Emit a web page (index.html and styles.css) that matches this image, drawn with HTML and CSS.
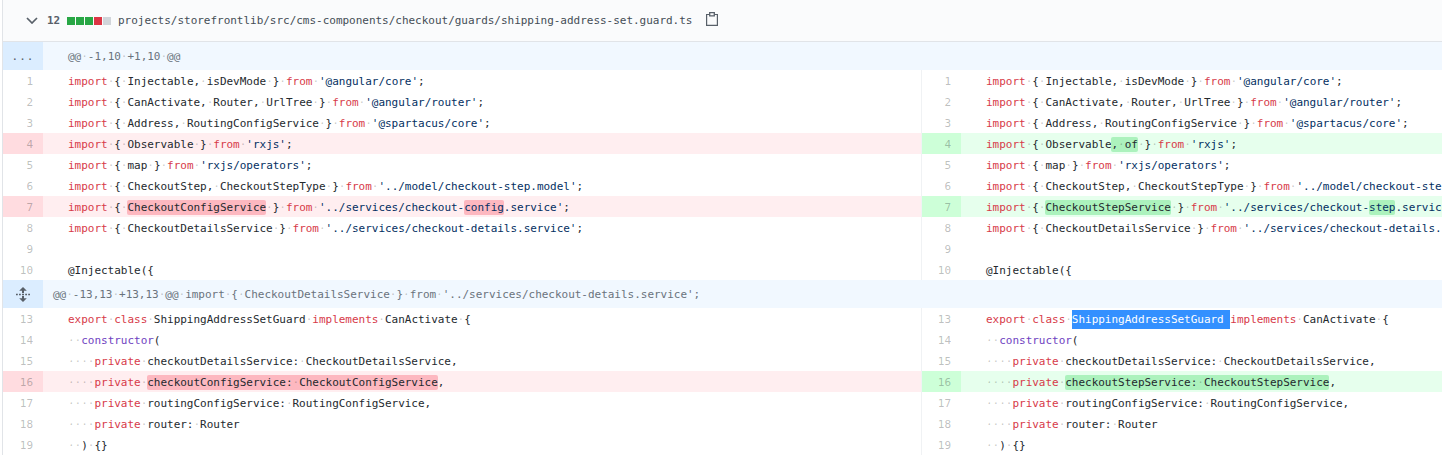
FILE: index.html
```html
<!DOCTYPE html>
<html lang="en">
<head>
    <meta charset="UTF-8">
    <title>shipping-address-set.guard.ts</title>
    <link rel="stylesheet" href="styles.css">
</head>
<body>
    <div class="file">
        <div class="file-header">
            <svg class="chevron" width="12" height="7" viewBox="0 0 12 7"><path d="M1 1l5 5 5-5" fill="none" stroke="#586069" stroke-width="1.7"/></svg>
            <span class="count">12</span>
            <span class="diffstat"><i class="add"></i><i class="add"></i><i class="add"></i><i class="del"></i><i class="none"></i></span>
            <span class="path">projects/storefrontlib/src/cms-components/checkout/guards/shipping-address-set.guard.ts</span>
            <svg class="clippy" width="12" height="14" viewBox="0 0 12 14"><path d="M3.5 2.5h-2.9v10.9h10.8V2.5H8.5" fill="none" stroke="#586069" stroke-width="1.2"/><path d="M3.7 .7h4.6v3.1H3.7z" fill="none" stroke="#586069" stroke-width="1.3"/></svg>
        </div>

        <div class="hunk">
            <div class="hunk-num dots">...</div>
            <div class="hunk-code first"><i>@@</i><u>·</u>-1,10<u>·</u>+1,10<u>·</u><i>@@</i></div>
        </div>

        <div class="row">
            <div class="side left"><div class="num">1</div><div class="code"><b>import</b><u>·</u>{<u>·</u>Injectable,<u>·</u>isDevMode<u>·</u>}<u>·</u><b>from</b><u>·</u><s>'@angular/core'</s>;</div></div>
            <div class="side right"><div class="num">1</div><div class="code"><b>import</b><u>·</u>{<u>·</u>Injectable,<u>·</u>isDevMode<u>·</u>}<u>·</u><b>from</b><u>·</u><s>'@angular/core'</s>;</div></div>
        </div>
        <div class="row">
            <div class="side left"><div class="num">2</div><div class="code"><b>import</b><u>·</u>{<u>·</u>CanActivate,<u>·</u>Router,<u>·</u>UrlTree<u>·</u>}<u>·</u><b>from</b><u>·</u><s>'@angular/router'</s>;</div></div>
            <div class="side right"><div class="num">2</div><div class="code"><b>import</b><u>·</u>{<u>·</u>CanActivate,<u>·</u>Router,<u>·</u>UrlTree<u>·</u>}<u>·</u><b>from</b><u>·</u><s>'@angular/router'</s>;</div></div>
        </div>
        <div class="row">
            <div class="side left"><div class="num">3</div><div class="code"><b>import</b><u>·</u>{<u>·</u>Address,<u>·</u>RoutingConfigService<u>·</u>}<u>·</u><b>from</b><u>·</u><s>'@spartacus/core'</s>;</div></div>
            <div class="side right"><div class="num">3</div><div class="code"><b>import</b><u>·</u>{<u>·</u>Address,<u>·</u>RoutingConfigService<u>·</u>}<u>·</u><b>from</b><u>·</u><s>'@spartacus/core'</s>;</div></div>
        </div>
        <div class="row">
            <div class="side left removed"><div class="num">4</div><div class="code"><b>import</b><u>·</u>{<u>·</u>Observable<u>·</u>}<u>·</u><b>from</b><u>·</u><s>'rxjs'</s>;</div></div>
            <div class="side right added"><div class="num">4</div><div class="code"><b>import</b><u>·</u>{<u>·</u>Observable<em>,<u>·</u>of</em><u>·</u>}<u>·</u><b>from</b><u>·</u><s>'rxjs'</s>;</div></div>
        </div>
        <div class="row">
            <div class="side left"><div class="num">5</div><div class="code"><b>import</b><u>·</u>{<u>·</u>map<u>·</u>}<u>·</u><b>from</b><u>·</u><s>'rxjs/operators'</s>;</div></div>
            <div class="side right"><div class="num">5</div><div class="code"><b>import</b><u>·</u>{<u>·</u>map<u>·</u>}<u>·</u><b>from</b><u>·</u><s>'rxjs/operators'</s>;</div></div>
        </div>
        <div class="row">
            <div class="side left"><div class="num">6</div><div class="code"><b>import</b><u>·</u>{<u>·</u>CheckoutStep,<u>·</u>CheckoutStepType<u>·</u>}<u>·</u><b>from</b><u>·</u><s>'../model/checkout-step.model'</s>;</div></div>
            <div class="side right"><div class="num">6</div><div class="code"><b>import</b><u>·</u>{<u>·</u>CheckoutStep,<u>·</u>CheckoutStepType<u>·</u>}<u>·</u><b>from</b><u>·</u><s>'../model/checkout-step.model'</s>;</div></div>
        </div>
        <div class="row">
            <div class="side left removed"><div class="num">7</div><div class="code"><b>import</b><u>·</u>{<u>·</u><em>CheckoutConfigService</em><u>·</u>}<u>·</u><b>from</b><u>·</u><s>'../services/checkout-<em>config</em>.service'</s>;</div></div>
            <div class="side right added"><div class="num">7</div><div class="code"><b>import</b><u>·</u>{<u>·</u><em>CheckoutStepService</em><u>·</u>}<u>·</u><b>from</b><u>·</u><s>'../services/checkout-<em>step</em>.service'</s>;</div></div>
        </div>
        <div class="row">
            <div class="side left"><div class="num">8</div><div class="code"><b>import</b><u>·</u>{<u>·</u>CheckoutDetailsService<u>·</u>}<u>·</u><b>from</b><u>·</u><s>'../services/checkout-details.service'</s>;</div></div>
            <div class="side right"><div class="num">8</div><div class="code"><b>import</b><u>·</u>{<u>·</u>CheckoutDetailsService<u>·</u>}<u>·</u><b>from</b><u>·</u><s>'../services/checkout-details.service'</s>;</div></div>
        </div>
        <div class="row">
            <div class="side left"><div class="num">9</div><div class="code"></div></div>
            <div class="side right"><div class="num">9</div><div class="code"></div></div>
        </div>
        <div class="row">
            <div class="side left"><div class="num">10</div><div class="code">@Injectable({</div></div>
            <div class="side right"><div class="num">10</div><div class="code">@Injectable({</div></div>
        </div>

        <div class="hunk">
            <div class="hunk-num">
                <svg width="14" height="15" viewBox="0 0 14 15"><path d="M7 0L3.2 3.8H6V6h2V3.8h2.8zM7 15l-3.8-3.8H6V9h2v2.2h2.8z" fill="#586069"/><path d="M0 7.5h1.8M3 7.5h1.8M6 7.5h2M9.2 7.5H11M12.2 7.5H14" stroke="#586069" stroke-width="1.4"/></svg>
            </div>
            <div class="hunk-code"><i>@@</i><u>·</u>-13,13<u>·</u>+13,13<u>·</u><i>@@</i><u>·</u>import<u>·</u>{<u>·</u>CheckoutDetailsService<u>·</u>}<u>·</u>from<u>·</u>'../services/checkout-details.service';</div>
        </div>

        <div class="row">
            <div class="side left"><div class="num">13</div><div class="code"><b>export</b><u>·</u><b>class</b><u>·</u>ShippingAddressSetGuard<u>·</u><b>implements</b><u>·</u>CanActivate<u>·</u>{</div></div>
            <div class="side right"><div class="num">13</div><div class="code"><b>export</b><u>·</u><b>class</b><u>·</u><span class="selected">ShippingAddressSetGuard </span><b>implements</b><u>·</u>CanActivate<u>·</u>{</div></div>
        </div>
        <div class="row">
            <div class="side left"><div class="num">14</div><div class="code"><u>··</u><var>constructor</var>(</div></div>
            <div class="side right"><div class="num">14</div><div class="code"><u>··</u><var>constructor</var>(</div></div>
        </div>
        <div class="row">
            <div class="side left"><div class="num">15</div><div class="code"><u>····</u><b>private</b><u>·</u>checkoutDetailsService:<u>·</u>CheckoutDetailsService,</div></div>
            <div class="side right"><div class="num">15</div><div class="code"><u>····</u><b>private</b><u>·</u>checkoutDetailsService:<u>·</u>CheckoutDetailsService,</div></div>
        </div>
        <div class="row">
            <div class="side left removed"><div class="num">16</div><div class="code"><u>····</u><b>private</b><u>·</u><em>checkoutConfigService:<u>·</u>CheckoutConfigService</em>,</div></div>
            <div class="side right added"><div class="num">16</div><div class="code"><u>····</u><b>private</b><u>·</u><em>checkoutStepService:<u>·</u>CheckoutStepService</em>,</div></div>
        </div>
        <div class="row">
            <div class="side left"><div class="num">17</div><div class="code"><u>····</u><b>private</b><u>·</u>routingConfigService:<u>·</u>RoutingConfigService,</div></div>
            <div class="side right"><div class="num">17</div><div class="code"><u>····</u><b>private</b><u>·</u>routingConfigService:<u>·</u>RoutingConfigService,</div></div>
        </div>
        <div class="row">
            <div class="side left"><div class="num">18</div><div class="code"><u>····</u><b>private</b><u>·</u>router:<u>·</u>Router</div></div>
            <div class="side right"><div class="num">18</div><div class="code"><u>····</u><b>private</b><u>·</u>router:<u>·</u>Router</div></div>
        </div>
        <div class="row">
            <div class="side left"><div class="num">19</div><div class="code"><u>··</u>)<u>·</u>{}</div></div>
            <div class="side right"><div class="num">19</div><div class="code"><u>··</u>)<u>·</u>{}</div></div>
        </div>
    </div>
</body>
</html>
```

FILE: styles.css
```css
*{
    margin: 0;
    padding: 0;
    box-sizing: border-box;
}
html, body{
    height: 455px;
    overflow: hidden;
    background: #fff;
}
body{
    font-family: "DejaVu Sans Mono", "Liberation Mono", monospace;
    font-size: 11px;
    letter-spacing: -0.02px;
    color: #24292e;
}
.file{
    margin-left: 2px;
    border-left: 1px solid #e1e4e8;
}

/* file header */
.file-header{
    height: 42px;
    display: flex;
    align-items: center;
    background: #fafbfc;
    border-bottom: 1px solid #e1e4e8;
}
.chevron{
    margin-left: 23px;
    margin-right: 9px;
}
.count{
    width: 20px;
    font-weight: bold;
    color: #586069;
}
.diffstat{
    display: flex;
    gap: 1px;
    margin-right: 7px;
}
.diffstat i{
    width: 8px;
    height: 8px;
}
.diffstat .add{ background: #28a745; }
.diffstat .del{ background: #dc3545; }
.diffstat .none{ background: #d1d5da; }
.path{
    color: #444d56;
}
.clippy{
    margin-left: 14px;
    margin-top: -4px;
}

/* hunk separators */
.hunk{
    height: 28px;
    display: flex;
    align-items: center;
    background: #f1f8ff;
    white-space: nowrap;
}
.hunk-num{
    width: 40px;
    height: 100%;
    background: #dbedff;
    color: #586069;
    display: flex;
    align-items: center;
    justify-content: center;
}
.hunk-num.dots{
    letter-spacing: 1px;
}
.hunk-code{
    padding-left: 10px;
    color: #6a737d;
}
.hunk-code.first{
    padding-left: 25px;
}
.hunk-code i{
    font-style: normal;
}

/* diff rows */
.row{
    height: 21px;
    display: flex;
    white-space: nowrap;
}
.side{
    display: flex;
    overflow: hidden;
}
.side.left{
    width: 919px;
    flex: none;
    border-right: 1px solid #f0f2f4;
}
.side.right{
    flex: 1;
    min-width: 0;
}
.side.left .num{ width: 40px; }
.side.right .num{ width: 39px; }
.num{
    flex: none;
    padding: 1px 10px 0 0;
    text-align: right;
    line-height: 21px;
    color: rgba(27, 31, 35, 0.3);
}
.code{
    flex: 1;
    padding: 1px 0 0 25px;
    line-height: 21px;
}
.removed{ background: #ffeef0; }
.removed .num{ background: #ffdce0; }
.added{ background: #e6ffed; }
.added .num{ background: #cdffd8; }

/* tokens */
.code b{
    font-weight: normal;
    color: #d73a49;
}
.code s{
    text-decoration: none;
    color: #032f62;
}
.code var{
    font-style: normal;
    color: #6f42c1;
}
u{
    text-decoration: none;
    color: rgba(27, 31, 35, 0.25);
}
em{
    font-style: normal;
    padding: 1px 0;
    border-radius: 2px;
}
.removed em{ background: #fdb8c0; }
.added em{ background: #acf2bd; }
.selected{
    padding: 3px 0 5px;
    background: #3390ff;
    color: #fff;
    white-space: pre;
}
```
